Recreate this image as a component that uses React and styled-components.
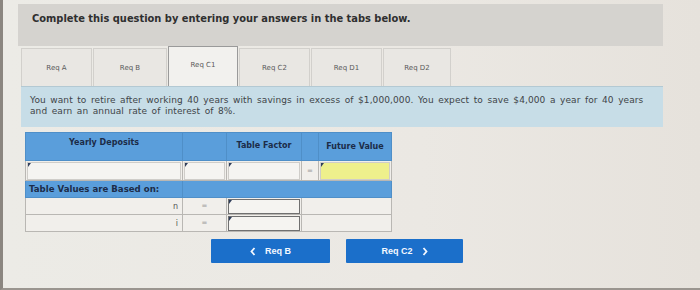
import React from "react";
import styled, { createGlobalStyle } from "styled-components";

const Global = createGlobalStyle`
  html, body {
    margin: 0;
    padding: 0;
    background: #ebe8e3;
  }
  body {
    font-family: "DejaVu Sans", Verdana, sans-serif;
    color: #3a3a3a;
  }
`;

const Page = styled.div`
  width: 700px;
  height: 290px;
  box-sizing: border-box;
  border-left: 3px solid #8b8680;
  border-bottom: 2px solid #9a958f;
  padding: 4px 37px 0 15px;
  background: linear-gradient(90deg, #ecebe6 0%, #ebe8e3 60%, #e6e2dc 100%);
`;

const Header = styled.div`
  height: 42px;
  background: #d5d3cf;
  box-sizing: border-box;
  padding: 9px 0 0 14px;
  font-size: 9.9px;
  font-weight: bold;
  color: #2f2f2f;
`;

const Tabs = styled.div`
  display: flex;
  gap: 1px;
  margin: 1px 0 0 3px;
  height: 39px;
  align-items: flex-end;
`;

const Tab = styled.div`
  width: ${(p) => p.w}px;
  height: ${(p) => (p.active ? 40 : 38)}px;
  box-sizing: border-box;
  border: ${(p) => (p.active ? "1.5px solid #9a9a9a" : "1px solid #d2d0cc")};
  border-bottom: none;
  background: ${(p) => (p.active ? "#f2f1ee" : "#e9e7e3")};
  font-size: 7px;
  color: #5a5a5a;
  display: flex;
  justify-content: center;
  padding-top: ${(p) => (p.active ? 14 : 15)}px;
  position: relative;
  z-index: ${(p) => (p.active ? 1 : 0)};
`;

const Info = styled.div`
  margin-left: 3px;
  height: 41px;
  box-sizing: border-box;
  background: #c7dde7;
  border-top: 1px solid #b3c9d3;
  padding: 8px 0 0 9px;
  font-size: 9px;
  letter-spacing: 0.1px;
  word-spacing: 1.5px;
  line-height: 10.5px;
  color: #404448;
`;

const Grid = styled.table`
  margin: 5px 0 0 7px;
  border-collapse: collapse;
  table-layout: fixed;
  width: 366px;
  font-size: 8px;
`;

const Row = styled.tr`
  height: ${(p) => p.h}px;
`;

const HeadCell = styled.td`
  background: #5a9edb;
  border: 1px solid #4f8fc8;
  color: #1c2c48;
  font-weight: bold;
  text-align: center;
  vertical-align: top;
  padding: ${(p) => p.pt || 7}px 0 0;
`;

const BandCell = styled.td`
  background: #5a9edb;
  border: 1px solid #4f8fc8;
  color: #1c2c48;
  font-weight: bold;
  padding: 0 0 0 3px;
  font-size: 8.6px;
`;

const Cell = styled.td`
  background: ${(p) => p.bg || "#f1efeb"};
  border: 1px solid #b9b7b3;
  padding: 0 4px;
  text-align: ${(p) => p.align || "left"};
  color: ${(p) => (p.dark ? "#555" : "#999")};
  font-size: ${(p) => (p.dark ? 8 : 7)}px;
`;

const Input = styled.div`
  height: ${(p) => p.h || 16}px;
  box-sizing: border-box;
  background: ${(p) => p.bg || "#f5f4f1"};
  border: ${(p) => (p.strong ? "1.5px solid #707070" : "1px solid #cfcdc9")};
  position: relative;
  &:before {
    content: "";
    position: absolute;
    left: 0;
    top: 0;
    border-top: 4px solid #2f3e5a;
    border-right: 3px solid transparent;
  }
`;

const InCell = styled.td`
  padding: 1px 1px 0;
  border: 1px solid #b9b7b3;
  background: #f1efeb;
`;

const Buttons = styled.div`
  display: flex;
  gap: 16px;
  margin: 7px 0 0 193px;
`;

const NavButton = styled.div`
  width: ${(p) => p.w}px;
  height: 24px;
  background: #1b6fca;
  border-radius: 1px;
  color: #f4f8ff;
  font-weight: bold;
  font-size: 9px;
  display: flex;
  align-items: center;
  justify-content: center;
  gap: 9px;
  font-family: "Liberation Sans", Arial, sans-serif;
`;

const Chevron = ({ dir }) => (
  <svg width="6" height="9" viewBox="0 0 6 9">
    <path
      d={dir === "left" ? "M4.5 1 L1.5 4.5 L4.5 8" : "M1.5 1 L4.5 4.5 L1.5 8"}
      fill="none"
      stroke="#f4f8ff"
      strokeWidth="1.8"
    />
  </svg>
);

const tabs = [
  ["Req A", 71],
  ["Req B", 74],
  ["Req C1", 70],
  ["Req C2", 71],
  ["Req D1", 71],
  ["Req D2", 68],
];

export default function App() {
  return (
    <>
      <Global />
      <Page>
        <Header>Complete this question by entering your answers in the tabs below.</Header>
        <Tabs>
          {tabs.map(([t, w]) => (
            <Tab key={t} w={w} active={t === "Req C1"}>
              {t}
            </Tab>
          ))}
        </Tabs>
        <Info>
          You want to retire after working 40 years with savings in excess of $1,000,000. You expect to save $4,000 a year for 40 years
          <br />
          and earn an annual rate of interest of 8%.
        </Info>
        <Grid>
          <colgroup>
            <col style={{ width: 157 }} />
            <col style={{ width: 44 }} />
            <col style={{ width: 75 }} />
            <col style={{ width: 17 }} />
            <col style={{ width: 73 }} />
          </colgroup>
          <tbody>
            <Row h={28}>
              <HeadCell pt={5}>Yearly Deposits</HeadCell>
              <HeadCell />
              <HeadCell pt={8}>Table Factor</HeadCell>
              <HeadCell />
              <HeadCell pt={9}>Future Value</HeadCell>
            </Row>
            <Row h={20}>
              <InCell><Input h={18} /></InCell>
              <InCell><Input h={18} /></InCell>
              <InCell><Input h={18} /></InCell>
              <Cell align="center">=</Cell>
              <InCell><Input h={18} bg="#eef08c" /></InCell>
            </Row>
            <Row h={17}>
              <BandCell>Table Values are Based on:</BandCell>
              <BandCell colSpan={4} />
            </Row>
            <Row h={17}>
              <Cell align="right" dark>n</Cell>
              <Cell align="center">=</Cell>
              <InCell><Input strong h={15} /></InCell>
              <Cell colSpan={2} />
            </Row>
            <Row h={17}>
              <Cell align="right" dark>i</Cell>
              <Cell align="center">=</Cell>
              <InCell><Input strong h={15} /></InCell>
              <Cell colSpan={2} />
            </Row>
          </tbody>
        </Grid>
        <Buttons>
          <NavButton w={119}>
            <Chevron dir="left" />
            <span>Req B</span>
          </NavButton>
          <NavButton w={117}>
            <span>Req C2</span>
            <Chevron dir="right" />
          </NavButton>
        </Buttons>
      </Page>
    </>
  );
}
